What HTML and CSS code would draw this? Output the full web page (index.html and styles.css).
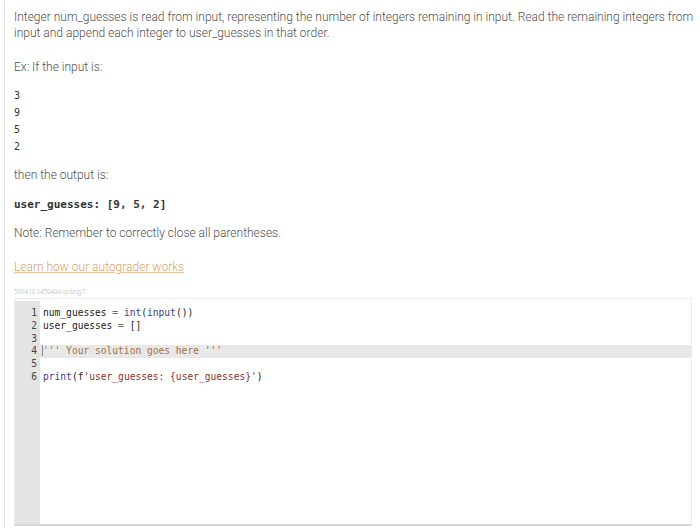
FILE: index.html
```html
<!DOCTYPE html>
<html>
<head>
<meta charset="utf-8">
<link rel="stylesheet" href="styles.css">
</head>
<body>
<div class="page">
  <p class="txt first">Integer num_guesses is read from input, representing the number of integers remaining in input. Read the remaining integers from input and append each integer to user_guesses in that order.</p>
  <p class="txt ex">Ex: If the input is:</p>
  <pre class="sample">3
9
5
2</pre>
  <p class="txt then">then the output is:</p>
  <pre class="output">user_guesses: [9, 5, 2]</pre>
  <p class="txt note">Note: Remember to correctly close all parentheses.</p>
  <a class="link" href="#">Learn how our autograder works</a>
  <div class="qid">508410.2459434.qx3zqy7</div>
  <div class="editor">
    <div class="gutter">
      <div>1</div><div>2</div><div>3</div><div>4</div><div>5</div><div>6</div>
    </div>
    <div class="code">
      <div class="ln">num_guesses <span class="op">=</span> <span class="bi">int</span>(<span class="bi">input</span>())</div>
      <div class="ln">user_guesses <span class="op">=</span> []</div>
      <div class="ln">&nbsp;</div>
      <div class="ln active"><span class="cursor"></span><span class="str">''' Your solution goes here '''</span></div>
      <div class="ln">&nbsp;</div>
      <div class="ln"><span class="bi">print</span>(f<span class="str2">'user_guesses: {user_guesses}'</span>)</div>
    </div>
  </div>
</div>
</body>
</html>
```
FILE: styles.css
```css
html, body {
  margin: 0;
  padding: 0;
  background: #fff;
}
.page {
  margin-left: 4px;
  border-left: 1px solid #e6e6e6;
  padding: 9px 3px 0 9px;
  height: 519px;
  font-family: Roboto, "Liberation Sans", sans-serif;
  font-weight: 300;
  color: #505050;
}
.txt {
  margin: 0;
  font-size: 12px;
  line-height: 16px;
}
.ex { margin-top: 18px; }
.sample {
  margin: 12px 0 0;
  font-family: "DejaVu Sans Mono", monospace;
  font-size: 10px;
  line-height: 17px;
  color: #333;
}
.then { margin-top: 12px; }
.output {
  margin: 13px 0 0;
  font-family: "DejaVu Sans Mono", monospace;
  font-size: 11px;
  font-weight: bold;
  line-height: 17px;
  color: #333;
}
.note { margin-top: 12px; }
.link {
  display: block;
  margin-top: 18px;
  font-size: 12px;
  line-height: 16px;
  color: #d9a06a;
  text-decoration: underline;
  text-decoration-color: #e6c3a0;
}
.qid {
  margin-top: 12px;
  font-size: 6.5px;
  line-height: 10px;
  color: #b8b8b8;
  letter-spacing: -0.1px;
}
.editor {
  margin-top: 1px;
  display: flex;
  height: 223px;
  margin-right: 5px;
  border: 1px solid #ececec;
  border-bottom: 2px solid #d6d6d6;
  padding-top: 2px;
  background: #fff;
}
.gutter {
  width: 25px;
  background: #e4e4e4;
  padding-top: 6px;
  box-sizing: border-box;
  padding-right: 3px;
  text-align: right;
  font-family: "DejaVu Sans Mono", monospace;
  font-size: 9.6px;
  line-height: 12.8px;
  color: #444;
}
.code {
  flex: 1;
  padding-top: 6px;
  font-family: "DejaVu Sans Mono", monospace;
  font-size: 9.6px;
  line-height: 12.8px;
  color: #222;
}
.ln {
  padding-left: 3px;
  white-space: pre;
  height: 12.8px;
}
.ln.active {
  background: #e8e8e8;
  padding-left: 0;
}
.cursor {
  display: inline-block;
  width: 1px;
  height: 11px;
  margin-left: 2px;
  vertical-align: -2px;
  background: #888;
}
.op { color: #666; }
.bi { color: #3c3c8c; }
.str { color: #a0704a; }
.str2 { color: #8a3030; }
```
